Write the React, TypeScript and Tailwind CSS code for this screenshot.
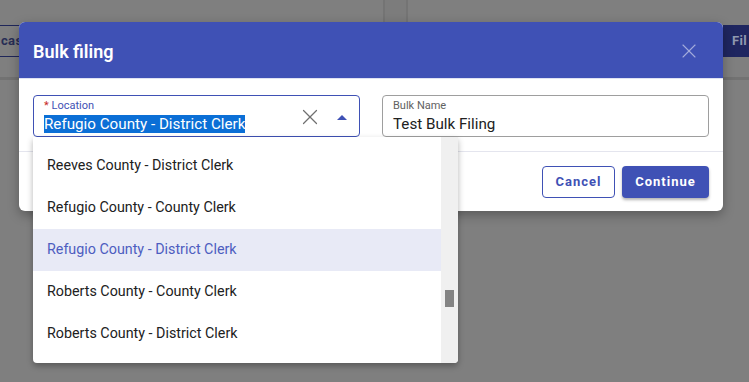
import { X } from "lucide-react";

const options = [
  "Reeves County - District Clerk",
  "Refugio County - County Clerk",
  "Refugio County - District Clerk",
  "Roberts County - County Clerk",
  "Roberts County - District Clerk",
];

export default function App() {
  return (
    <div
      className="relative w-[749px] h-[382px] overflow-hidden bg-[#7f7f7f]"
      style={{ fontFamily: "Roboto, 'Liberation Sans', sans-serif" }}
    >
      {/* page behind the overlay */}
      <div className="flex h-[22px]">
        <div className="w-[383px]" />
        <div className="w-[2px] bg-[#747474]" />
        <div className="w-[21px] bg-[#7c7c7c]" />
        <div className="w-[2px] bg-[#747474]" />
      </div>
      <div className="flex justify-between mt-[3px] h-[32px]">
        <div className="w-[40px] border border-l-0 border-[#1f2659] flex items-center overflow-hidden">
          <span className="text-[13px] font-bold text-[#272d55] tracking-wide ml-[1px]">case</span>
        </div>
        <div className="w-[26px] bg-[#1f2660] flex items-center overflow-hidden pl-[9px]">
          <span className="text-[13px] font-bold text-[#8f99b0] tracking-wide">Fil</span>
        </div>
      </div>
      <div className="mt-[20px] h-[3px] bg-[#727272]" />

      {/* dialog */}
      <div className="absolute left-[19px] top-[22px] w-[704px] rounded-[6px] bg-white shadow-[0_4px_12px_rgba(0,0,0,0.3)] overflow-hidden">
        <div className="h-[57px] bg-[#3f51b5] flex items-center justify-between pl-[14px] pr-[22px] pt-[2px] border-b border-[#dfe2f2]">
          <span className="text-[18px] font-semibold text-white">Bulk filing</span>
          <X size={24} strokeWidth={1.1} className="text-[#a4acdb]" />
        </div>
        <div className="flex gap-[22px] px-[14px] pt-[16px] pb-[14px] border-b border-[#e4e5ee]">
          <div className="w-[327px] h-[42px] rounded-[4px] border border-[#3f51b5] flex items-center pl-[10px] pr-[12px]">
            <div className="flex-1 flex flex-col leading-none">
              <span className="text-[11px] text-[#3f51b5] mt-[1px]">
                <span className="text-[#c62828]">*</span> Location
              </span>
              <span className="mt-[5px]">
                <span className="text-[15.2px] leading-[17px] text-white bg-[#0b6fd6]">Refugio County - District Clerk</span>
              </span>
            </div>
            <X size={26} strokeWidth={1.1} className="text-[#707070] mt-[2px] mr-[14px]" />
            <svg width="10" height="5" viewBox="0 0 10 5" className="mt-[2px]">
              <path d="M0 5L5 0L10 5Z" fill="#3f51b5" />
            </svg>
          </div>
          <div className="w-[327px] h-[42px] rounded-[4px] border border-[#9e9e9e] flex flex-col justify-center pl-[10px] leading-none">
            <span className="text-[11px] text-[#616161] mt-[1px]">Bulk Name</span>
            <span className="text-[15.2px] leading-[17px] text-[#212121] mt-[5px]">Test Bulk Filing</span>
          </div>
        </div>
        <div className="flex justify-end gap-[7px] px-[14px] pt-[14px] pb-[13px]">
          <button className="w-[73px] h-[32px] rounded-[4px] border border-[#3f51b5] text-[13px] font-bold tracking-[1px] text-[#3f51b5]">
            Cancel
          </button>
          <button className="w-[87px] h-[32px] rounded-[4px] bg-[#3f51b5] text-[13px] font-bold tracking-[1px] text-white shadow-[0_2px_3px_rgba(0,0,0,0.3)]">
            Continue
          </button>
        </div>
      </div>

      {/* dropdown menu */}
      <div className="absolute left-[33px] top-[137px] w-[425px] h-[226px] bg-white rounded-b-[4px] shadow-[0_3px_6px_rgba(0,0,0,0.3)] flex overflow-hidden">
        <div className="flex-1 py-[8px]">
          {options.map((o) => (
            <div
              key={o}
              className={
                o === "Refugio County - District Clerk"
                  ? "h-[42px] flex items-center pl-[14px] text-[14.3px] bg-[#e8eaf6] text-[#4d5dc0]"
                  : "h-[42px] flex items-center pl-[14px] text-[14.3px] text-[#212121]"
              }
            >
              {o}
            </div>
          ))}
        </div>
        <div className="w-[17px] bg-[#f0f0f0] pt-[153px] pl-[4px]">
          <div className="w-[9px] h-[17px] bg-[#848484]" />
        </div>
      </div>
    </div>
  );
}
